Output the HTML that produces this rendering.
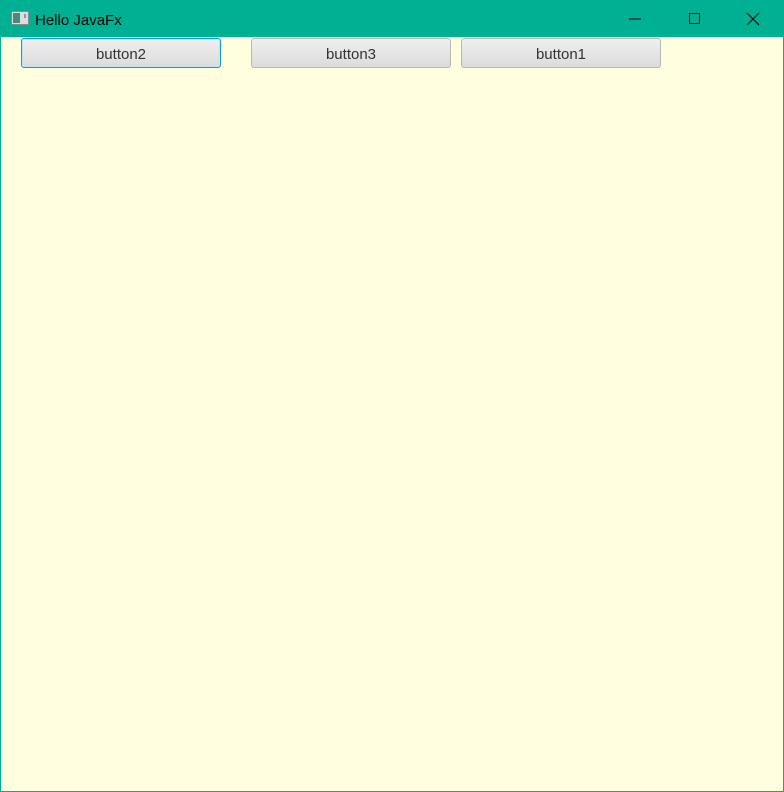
<!DOCTYPE html>
<html><head><meta charset="utf-8"><style>
html,body{margin:0;padding:0}
body{width:784px;height:792px;position:relative;overflow:hidden;background:#fffedf;font-family:"Liberation Sans",sans-serif}
.frame{position:absolute;left:0;top:0;width:782px;height:790px;border:1px solid #00b092}
.title{position:absolute;left:0;top:0;width:784px;height:37px;background:#00b092}
.t{position:absolute;left:35px;top:12px;font-size:15px;color:#000}
.btn{position:absolute;top:38px;width:198px;height:28px;border:1px solid #b8b8b8;border-radius:3px;background:linear-gradient(#efefef,#dcdcdc);font-size:15px;color:#333;text-align:center;line-height:31px}
.focus{border:1px solid #0a9fd8;box-shadow:inset 0 0 0 1px #bfe4f3}
</style></head><body>
<div class="frame"></div>
<div class="title">
<svg style="position:absolute;left:11px;top:11px" width="18" height="14"><rect x="0.5" y="0.5" width="17" height="13" fill="#ddd" stroke="#888"/><rect x="2" y="2" width="7" height="10" fill="#4a8a7a"/><rect x="13" y="3" width="2" height="4" fill="#6aa"/></svg>
<div class="t">Hello JavaFx</div>
<svg style="position:absolute;left:628px;top:12px" width="140" height="14">
<line x1="1" y1="7" x2="13" y2="7" stroke="#000" stroke-width="1"/>
<rect x="61.5" y="1.5" width="10" height="10" fill="none" stroke="#000"/>
<line x1="119" y1="1" x2="131" y2="13" stroke="#000"/><line x1="131" y1="1" x2="119" y2="13" stroke="#000"/>
</svg>
</div>
<div class="btn focus" style="left:21px">button2</div>
<div class="btn" style="left:251px">button3</div>
<div class="btn" style="left:461px">button1</div>
</body></html>
